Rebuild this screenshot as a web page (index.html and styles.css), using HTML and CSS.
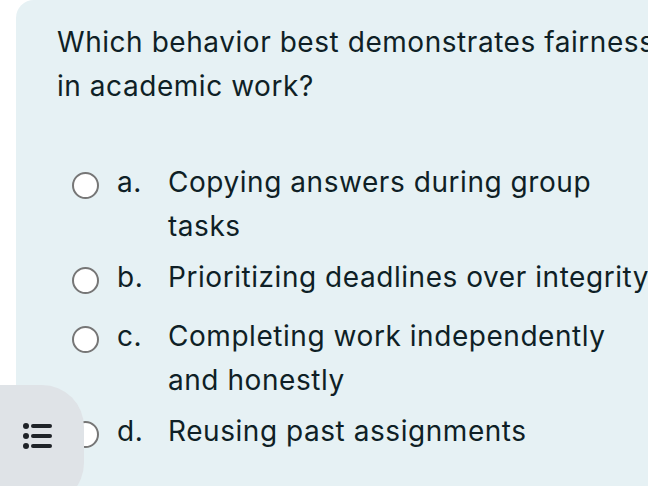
FILE: index.html
```html
<!DOCTYPE html>
<html>
<head>
<meta charset="utf-8">
<link rel="stylesheet" href="styles.css">
</head>
<body>
<div class="card">
  <div class="question">Which behavior best demonstrates fairness in academic work?</div>
  <div class="options">
    <div class="option"><span class="radio"></span><span class="letter">a.</span><span class="text">Copying answers during group tasks</span></div>
    <div class="option"><span class="radio"></span><span class="letter">b.</span><span class="text">Prioritizing deadlines over integrity</span></div>
    <div class="option"><span class="radio"></span><span class="letter">c.</span><span class="text">Completing work independently and honestly</span></div>
    <div class="option"><span class="radio"></span><span class="letter">d.</span><span class="text">Reusing past assignments</span></div>
  </div>
</div>
<div class="fab">
  <svg width="34" height="30" viewBox="0 0 34 30">
    <circle cx="5" cy="5" r="3" fill="#1f2328"/>
    <circle cx="5" cy="15" r="3" fill="#1f2328"/>
    <circle cx="5" cy="25" r="3" fill="#1f2328"/>
    <rect x="10" y="3" width="21" height="4" rx="2" fill="#1f2328"/>
    <rect x="10" y="13" width="21" height="4" rx="2" fill="#1f2328"/>
    <rect x="10" y="23" width="21" height="4" rx="2" fill="#1f2328"/>
  </svg>
</div>
</body>
</html>
```
FILE: styles.css
```css
html, body {
  margin: 0;
  padding: 0;
  background: #ffffff;
  overflow: hidden;
  height: 486px;
}
body {
  font-family: "Inter", "Noto Sans", sans-serif;
  color: #0f1f26;
  position: relative;
}
.card {
  margin-left: 16px;
  width: 700px;
  min-height: 540px;
  background: #e6f1f4;
  border-radius: 18px 0 0 0;
  padding: 20px 0 0 41px;
  box-sizing: border-box;
}
.question {
  font-size: 28px;
  letter-spacing: 0.55px;
  line-height: 44px;
  width: 615px;
}
.options {
  margin-top: 52px;
  padding-left: 15px;
}
.option {
  display: flex;
  align-items: flex-start;
  font-size: 28px;
  letter-spacing: 0.55px;
  line-height: 44px;
  min-height: 52px;
  margin-bottom: 7px;
}
.radio {
  flex: none;
  width: 27px;
  height: 27px;
  box-sizing: border-box;
  border: 2px solid #767676;
  border-radius: 50%;
  background: #ffffff;
  margin-top: 12px;
}
.letter {
  flex: none;
  width: 51px;
  margin-left: 18px;
}
.text {
  width: 484px;
}
.fab {
  position: absolute;
  left: 0;
  top: 385px;
  width: 84px;
  height: 120px;
  background: #dfe3e7;
  border-radius: 0 42px 42px 0;
  display: flex;
  align-items: flex-start;
  justify-content: flex-start;
  padding: 36px 0 0 21px;
  box-sizing: border-box;
}
```
